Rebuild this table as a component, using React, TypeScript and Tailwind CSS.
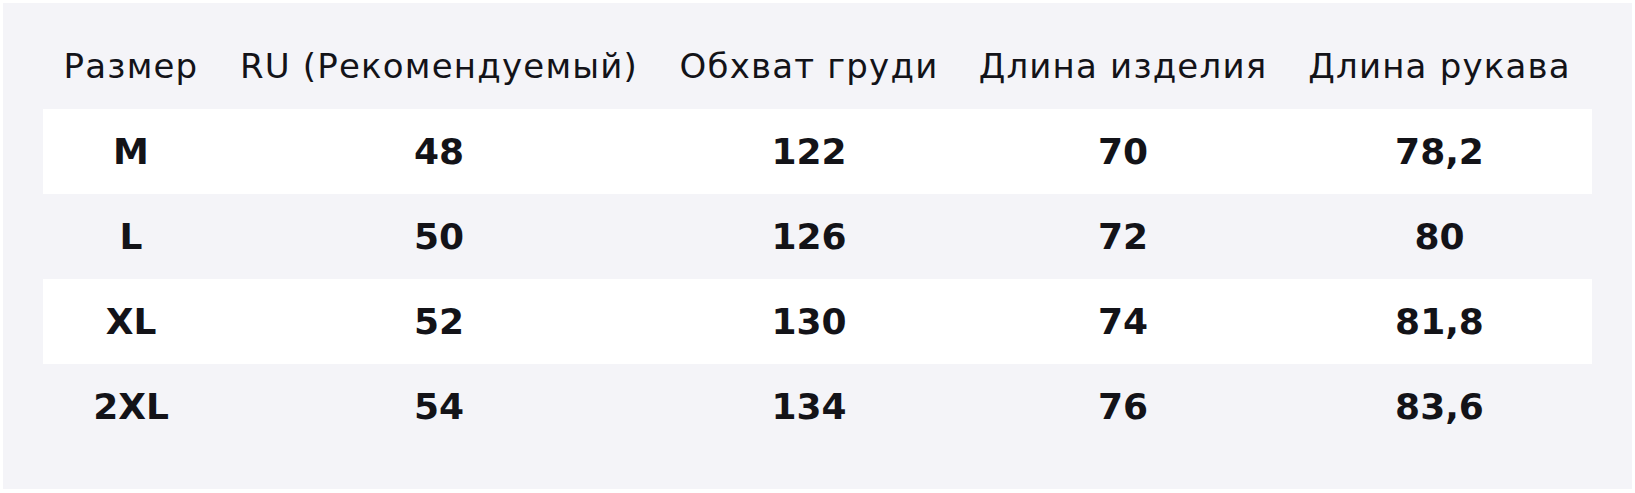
import React from "react";

const headers = ["Размер", "RU (Рекомендуемый)", "Обхват груди", "Длина изделия", "Длина рукава"];
const rows = [
  ["M", "48", "122", "70", "78,2"],
  ["L", "50", "126", "72", "80"],
  ["XL", "52", "130", "74", "81,8"],
  ["2XL", "54", "134", "76", "83,6"],
];

export default function App() {
  return (
    <div className="w-[1635px] h-[493px] bg-white p-[3px]" style={{ fontFamily: '"DejaVu Sans", sans-serif' }}>
      <div className="w-[1629px] h-[486px] bg-[#f4f4f8] pt-[20px] px-[40px] text-[#131318]">
        <div className="grid grid-cols-[176px_440px_300px_328px_305px] h-[86px] items-center text-center text-[34px] tracking-[1.2px]">
          {headers.map((h) => (
            <div key={h} className="whitespace-nowrap">{h}</div>
          ))}
        </div>
        {rows.map((r, i) => (
          <div
            key={r[0]}
            className={`grid grid-cols-[176px_440px_300px_328px_305px] h-[85px] items-center text-center text-[36px] font-bold ${i % 2 === 0 ? "bg-white" : "bg-[#f4f4f8]"}`}
          >
            {r.map((c, j) => (
              <div key={j}>{c}</div>
            ))}
          </div>
        ))}
      </div>
    </div>
  );
}
